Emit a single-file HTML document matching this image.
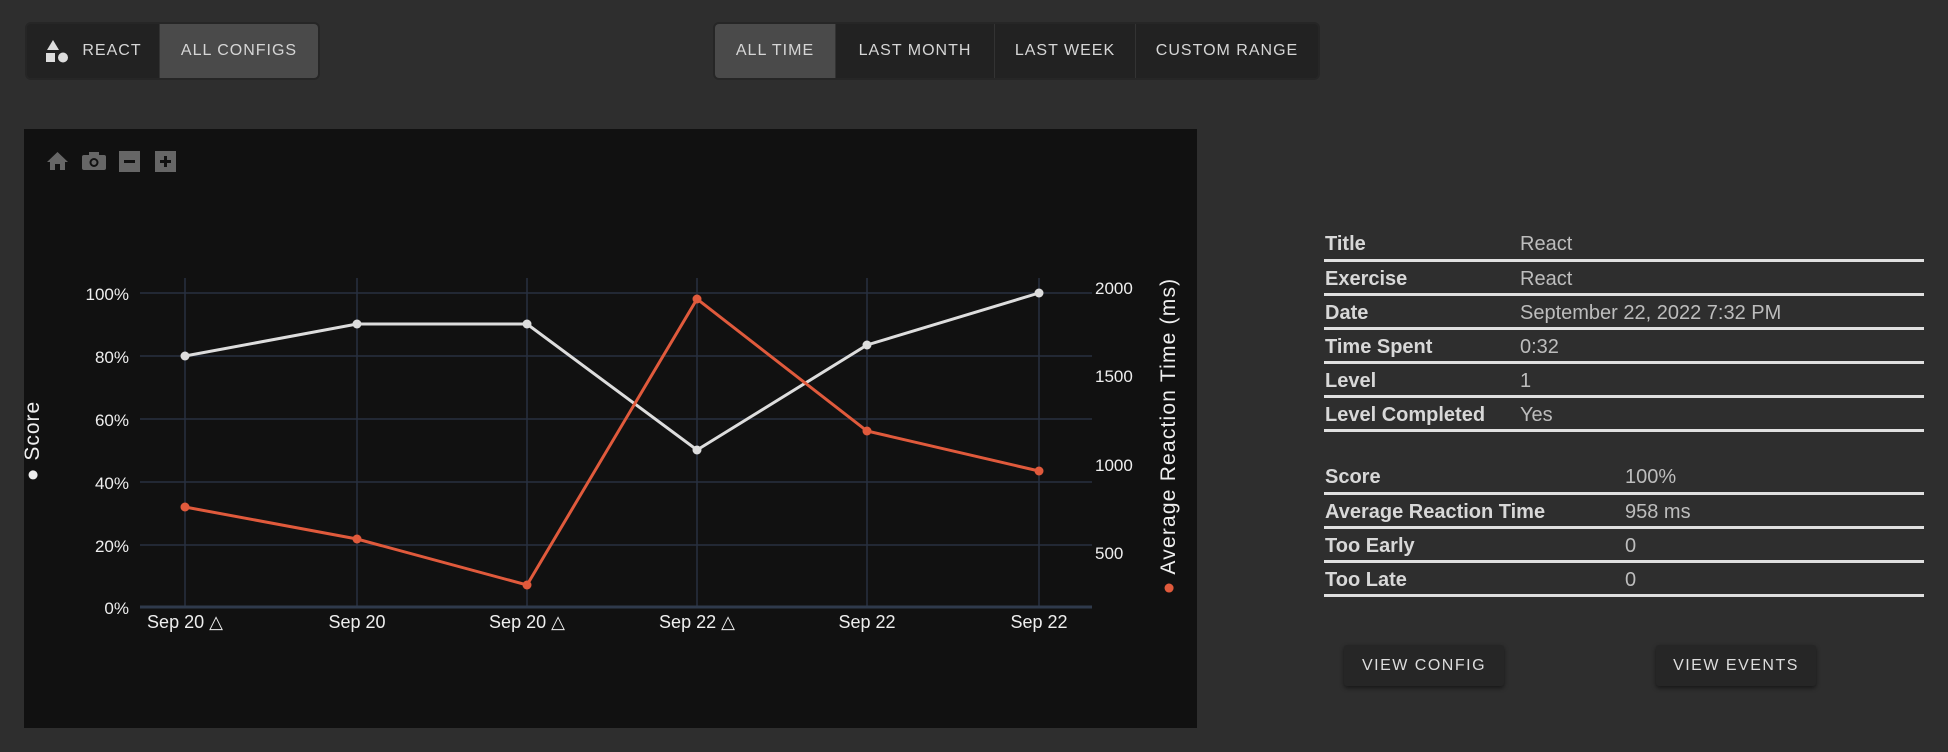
<!DOCTYPE html>
<html><head><meta charset="utf-8"><style>
*{margin:0;padding:0;box-sizing:border-box}
body{width:1948px;height:752px;background:#2e2e2e;font-family:"Liberation Sans",sans-serif;position:relative;overflow:hidden;color:#ddd}
.grp{position:absolute;top:22px;height:58px;border:2px solid #262626;border-radius:6px;display:flex;overflow:hidden;background:#222}
.grp div{height:100%;display:flex;align-items:center;justify-content:center;font-size:16px;letter-spacing:1px;color:#d6d6d6;border-right:1px solid #333}
.grp div:last-child{border-right:none}
.sel{background:#4a4a4a}
.chart{position:absolute;left:24px;top:129px;width:1173px;height:599px;background:#111}
table{position:absolute;left:1324px;width:600px;border-collapse:collapse;font-size:20px}
td{height:34px;border-bottom:3px solid #e0e0e0;padding:4px 0 0 1px;vertical-align:middle}
td.l{font-weight:bold;color:#d8d8d8}
td.v{color:#bdbdbd}
.btn{position:absolute;top:645px;width:160px;height:41px;background:#262626;box-shadow:0 2px 4px rgba(0,0,0,.5);border-radius:3px;display:flex;align-items:center;justify-content:center;font-size:16px;letter-spacing:1.5px;color:#ddd}
</style></head><body>
<div class="grp" style="left:25px;width:295px">
 <div style="width:133px"><svg width="26" height="26" viewBox="0 0 26 26" style="margin-right:12px"><polygon points="9,2 15,12 3,12" fill="#ddd"/><rect x="2" y="15" width="9" height="9" fill="#ddd"/><circle cx="19" cy="19.5" r="5" fill="#ddd"/></svg>REACT</div>
 <div class="sel" style="flex:1">ALL CONFIGS</div>
</div>
<div class="grp" style="left:713px;width:607px">
 <div class="sel" style="width:121px">ALL TIME</div>
 <div style="width:159px">LAST MONTH</div>
 <div style="width:141px">LAST WEEK</div>
 <div style="flex:1">CUSTOM RANGE</div>
</div>
<svg class="chart" width="1173" height="599" viewBox="24 129 1173 599" xmlns="http://www.w3.org/2000/svg" font-family="Liberation Sans, DejaVu Sans, sans-serif">
 <rect x="24" y="129" width="1173" height="599" fill="#111"/>
 <g fill="#666">
  <path d="M47 162 L57.5 152 L68 162 L65 162 L65 170 L60 170 L60 164 L55 164 L55 170 L50 170 L50 162Z"/>
  <rect x="82" y="155" width="24" height="15" rx="2"/><rect x="89" y="152" width="10" height="4"/>
  <circle cx="94" cy="162.5" r="4.5" fill="#111"/><circle cx="94" cy="162.5" r="2.5" fill="#666"/>
  <rect x="119" y="151" width="21" height="21"/><rect x="124" y="160" width="11" height="3" fill="#111"/>
  <rect x="155" y="151" width="21" height="21"/><rect x="160" y="160" width="11" height="3" fill="#111"/><rect x="164" y="156" width="3" height="11" fill="#111"/>
 </g>
 <g stroke="#283040" stroke-width="1.5">
  <line x1="185" y1="278" x2="185" y2="607"/><line x1="357" y1="278" x2="357" y2="607"/><line x1="527" y1="278" x2="527" y2="607"/><line x1="697" y1="278" x2="697" y2="607"/><line x1="867" y1="278" x2="867" y2="607"/><line x1="1039" y1="278" x2="1039" y2="607"/>
  <line x1="140" y1="293" x2="1092" y2="293"/><line x1="140" y1="356" x2="1092" y2="356"/><line x1="140" y1="419" x2="1092" y2="419"/><line x1="140" y1="482" x2="1092" y2="482"/><line x1="140" y1="545" x2="1092" y2="545"/>
 </g>
 <line x1="140" y1="607" x2="1092" y2="607" stroke="#2f3a4c" stroke-width="3"/>
 <g font-size="17" fill="#eee" text-anchor="end">
  <text x="129" y="300">100%</text><text x="129" y="363">80%</text><text x="129" y="426">60%</text><text x="129" y="489">40%</text><text x="129" y="552">20%</text><text x="129" y="614">0%</text>
 </g>
 <g font-size="17" fill="#eee">
  <text x="1095" y="294">2000</text><text x="1095" y="382">1500</text><text x="1095" y="471">1000</text><text x="1095" y="559">500</text>
 </g>
 <g font-size="18" fill="#eee" text-anchor="middle">
  <text x="185" y="628">Sep 20 △</text><text x="357" y="628">Sep 20</text><text x="527" y="628">Sep 20 △</text><text x="697" y="628">Sep 22 △</text><text x="867" y="628">Sep 22</text><text x="1039" y="628">Sep 22</text>
 </g>
 <text transform="translate(39,441) rotate(-90)" font-size="21" fill="#eee" text-anchor="middle" letter-spacing="1">● Score</text>
 <text transform="translate(1175,436) rotate(-90)" font-size="21" fill="#eee" text-anchor="middle" letter-spacing="1.2"><tspan fill="#e05a3c">●</tspan> Average Reaction Time (ms)</text>
 <polyline points="185,356 357,324 527,324 697,450 867,345 1039,293" fill="none" stroke="#ddd" stroke-width="3"/>
 <g fill="#ddd"><circle cx="185" cy="356" r="4.5"/><circle cx="357" cy="324" r="4.5"/><circle cx="527" cy="324" r="4.5"/><circle cx="697" cy="450" r="4.5"/><circle cx="867" cy="345" r="4.5"/><circle cx="1039" cy="293" r="4.5"/></g>
 <polyline points="185,507 357,539 527,585 697,299 867,431 1039,471" fill="none" stroke="#e05a3c" stroke-width="3"/>
 <g fill="#e05a3c"><circle cx="185" cy="507" r="4.5"/><circle cx="357" cy="539" r="4.5"/><circle cx="527" cy="585" r="4.5"/><circle cx="697" cy="299" r="4.5"/><circle cx="867" cy="431" r="4.5"/><circle cx="1039" cy="471" r="4.5"/></g>
</svg>
<table style="top:226px">
 <tr><td class="l" style="width:195px">Title</td><td class="v">React</td></tr>
 <tr><td class="l">Exercise</td><td class="v">React</td></tr>
 <tr><td class="l">Date</td><td class="v">September 22, 2022 7:32 PM</td></tr>
 <tr><td class="l">Time Spent</td><td class="v">0:32</td></tr>
 <tr><td class="l">Level</td><td class="v">1</td></tr>
 <tr><td class="l">Level Completed</td><td class="v">Yes</td></tr>
</table>
<table style="top:459px">
 <tr><td class="l" style="width:300px">Score</td><td class="v">100%</td></tr>
 <tr><td class="l">Average Reaction Time</td><td class="v">958 ms</td></tr>
 <tr><td class="l">Too Early</td><td class="v">0</td></tr>
 <tr><td class="l">Too Late</td><td class="v">0</td></tr>
</table>
<div class="btn" style="left:1344px">VIEW CONFIG</div>
<div class="btn" style="left:1656px">VIEW EVENTS</div>
</body></html>
